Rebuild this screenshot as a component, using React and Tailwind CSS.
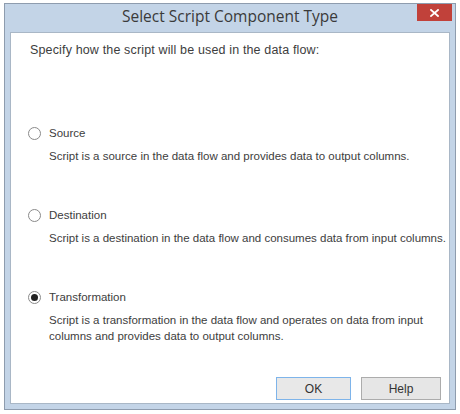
export default function App() {
  const options = [
    { label: 'Source', desc: 'Script is a source in the data flow and provides data to output columns.' },
    { label: 'Destination', desc: 'Script is a destination in the data flow and consumes data from input columns.' },
    {
      label: 'Transformation',
      desc: 'Script is a transformation in the data flow and operates on data from input columns and provides data to output columns.',
      checked: true,
    },
  ];

  return (
    <div className="w-[460px] h-[414px] bg-white pt-[3px] pl-[4px]">
      <div className="w-[452px] h-[407px] bg-[#c3d4e7] border border-[#8e9cae] flex flex-col">
        <div className="relative h-[28px] flex items-center justify-center">
          <span className="text-[15.5px] text-[#3a3a3a] leading-none pb-[3px]" style={{ fontFamily: '"Open Sans", "Noto Sans", sans-serif' }}>
            Select Script Component Type
          </span>
          <div className="absolute right-[3px] top-0 w-[35px] h-[17px] bg-[#c1413a] flex items-center justify-center">
            <svg width="9" height="8" viewBox="0 0 9 8">
              <path d="M1 1L8 7M8 1L1 7" stroke="#fff" strokeWidth="1.8" strokeLinecap="square" />
            </svg>
          </div>
        </div>
        <div
          className="mx-[5px] mb-[5px] flex-1 bg-white border border-[#a9b7c6] flex flex-col text-[11.5px] leading-[14px] text-[#3d3d3d]"
          style={{ fontFamily: '"Liberation Sans", Arial, sans-serif' }}
        >
          <p className="mt-[10px] ml-[19px] text-[12.5px] tracking-[0.15px]">Specify how the script will be used in the data flow:</p>
          <div className="mt-[69px] flex flex-col gap-[44px]">
            {options.map((o) => (
              <div key={o.label} className="ml-[17px]">
                <div className="flex items-center gap-[8px]">
                  <span className="w-[13px] h-[13px] rounded-full border border-[#8a8a8a] bg-white flex items-center justify-center">
                    {o.checked && <span className="w-[7px] h-[7px] rounded-full bg-[#222]" />}
                  </span>
                  <span>{o.label}</span>
                </div>
                <p className="ml-[21px] mt-[8px] w-[400px] leading-[16px]">{o.desc}</p>
              </div>
            ))}
          </div>
          <div className="mt-auto mb-[3px] mr-[8px] flex justify-end gap-[10px]">
            <button className="w-[75px] h-[23px] border border-[#7eb4ea] bg-[#e8e8e8] text-[12px] text-[#333]">OK</button>
            <button className="w-[80px] h-[23px] border border-[#acacac] bg-[#e6e6e6] text-[12px] text-[#333]">Help</button>
          </div>
        </div>
      </div>
    </div>
  );
}
